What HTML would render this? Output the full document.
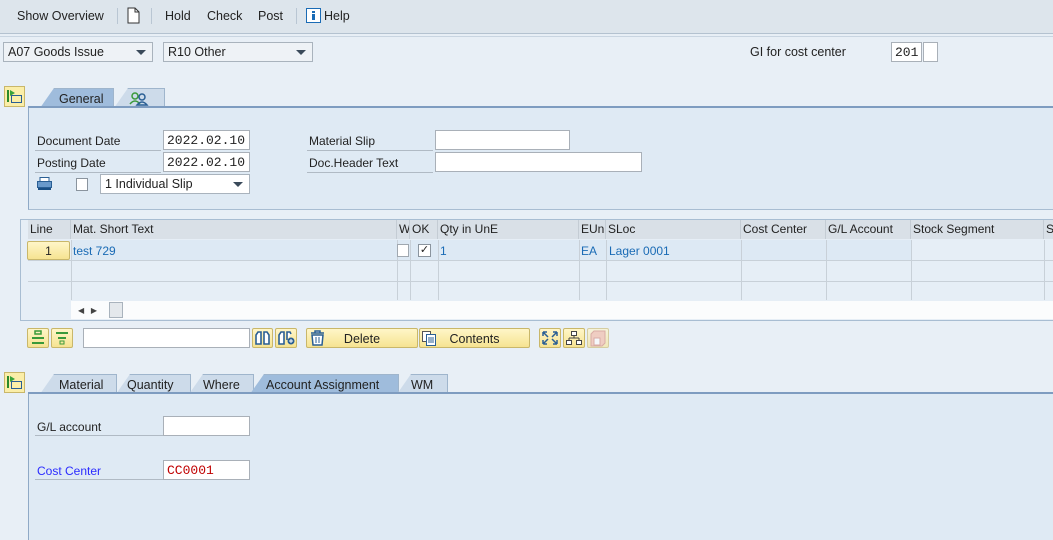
<!DOCTYPE html>
<html><head><meta charset="utf-8"><style>
*{box-sizing:border-box;margin:0;padding:0}
body{width:1053px;height:540px;overflow:hidden;background:#e8eff6;font-family:"Liberation Sans",Tahoma,sans-serif;font-size:12px;color:#222;position:relative}
.a{position:absolute}
.tb{left:0;top:0;width:1053px;height:34px;background:#dde5ec;border-bottom:1px solid #b4c2d0}
.tb span{position:absolute;top:9px;font-size:12.5px;color:#222}
.sep{position:absolute;top:8px;width:1px;height:16px;background:#b9c6d3}
.dd{height:20px;background:#eef2f6;border:1px solid #a9b3bd;padding:2px 4px;font-size:12.5px}
.dd:after{content:"";position:absolute;right:6px;top:7px;border-left:5px solid transparent;border-right:5px solid transparent;border-top:5px solid #3a4a5a}
.in{height:20px;background:#fff;border:1px solid #a9b0b8;padding:2px 3px;font-family:"Liberation Mono",monospace;font-size:13px;line-height:15px}
.lbl{font-size:12px}
.tab{height:20px;background:#cddbea;border:1px solid #9fb5cc;border-bottom:none;clip-path:polygon(14px 0,100% 0,100% 100%,0 100%);padding:3px 0 0 18px;font-size:12.5px}
.tab.on{background:#9fbcdc}
.th{top:220px;height:19px;background:#d9e0e7;border-right:1px solid #c4ccd4;padding:2px 2px;font-size:12px}
.vl{width:1px;background:#c8d0d8}
.hl{height:1px;background:#c8d0d8}
.btn{height:20px;background:linear-gradient(#fff6c8,#f6e391);border:1px solid #c9b76a;border-radius:2px}
.blue{color:#1a6bb5}
</style></head><body>
<div class="a tb">
<span style="left:17px">Show Overview</span>
<div class="sep" style="left:117px"></div>
<svg class="a" style="left:127px;top:7px" width="13" height="17"><path d="M1 1H8L12 5V16H1Z" fill="#fff" stroke="#333"/><path d="M8 1V5H12" fill="none" stroke="#333"/></svg>
<div class="sep" style="left:151px"></div>
<span style="left:165px">Hold</span><span style="left:207px">Check</span><span style="left:258px">Post</span>
<div class="sep" style="left:296px"></div>
<svg class="a" style="left:306px;top:8px" width="15" height="15"><rect x=".5" y=".5" width="14" height="14" fill="#fff" stroke="#1a6bb5"/><rect x="6" y="3" width="3" height="2" fill="#1a6bb5"/><rect x="6" y="6" width="3" height="6" fill="#1a6bb5"/></svg>
<span style="left:324px">Help</span>
</div>
<div class="a" style="left:0;top:36px;width:1053px;height:1px;background:#c9d5e1"></div>
<div class="a dd" style="left:3px;top:42px;width:150px">A07 Goods Issue</div>
<div class="a dd" style="left:163px;top:42px;width:150px">R10 Other</div>
<div class="a lbl" style="left:750px;top:45px;font-size:12.5px">GI for cost center</div>
<div class="a in" style="left:891px;top:42px;width:31px">201</div>
<div class="a in" style="left:923px;top:42px;width:15px"></div>

<div class="a" style="left:4px;top:86px;width:21px;height:21px;background:#fbeea8;border:1px solid #c9b76a"><svg width="19" height="19"><path d="M3 3V15" stroke="#2a8a2a" stroke-width="2"/><path d="M5 3L10 6L5 9Z" fill="#3aa33a"/><rect x="6.5" y="8.5" width="10" height="7" fill="none" stroke="#2a5f94"/></svg></div>
<div class="a tab on" style="left:40px;top:88px;width:74px">General</div>
<div class="a tab" style="left:114px;top:88px;width:51px"><svg width="20" height="14" style="margin-left:-4px"><circle cx="6" cy="4" r="3" fill="none" stroke="#3a9a3a" stroke-width="1.5"/><path d="M1 12Q6 6 11 12" fill="none" stroke="#3a9a3a" stroke-width="1.5"/><circle cx="13" cy="5" r="3" fill="none" stroke="#2a5f94" stroke-width="1.5"/><path d="M8 13Q13 7 18 13Z" fill="none" stroke="#2a5f94" stroke-width="1.5"/></svg></div>
<div class="a" style="left:28px;top:106px;width:1025px;height:2px;background:#7e9cc0"></div>
<div class="a" style="left:28px;top:108px;width:1025px;height:102px;background:#dfeaf4;border-left:1px solid #8fa9c6;border-bottom:1px solid #a8bdd2"></div>
<div class="a lbl" style="left:37px;top:134px">Document Date</div>
<div class="a" style="left:35px;top:150px;width:126px;height:1px;background:#b0bac4"></div>
<div class="a in" style="left:163px;top:130px;width:87px">2022.02.10</div>
<div class="a lbl" style="left:37px;top:156px">Posting Date</div>
<div class="a" style="left:35px;top:172px;width:126px;height:1px;background:#b0bac4"></div>
<div class="a in" style="left:163px;top:152px;width:87px">2022.02.10</div>
<svg class="a" style="left:37px;top:177px" width="15" height="14"><rect x="3" y="0.5" width="9" height="4" fill="#fff" stroke="#2a5f94"/><rect x="0.5" y="4.5" width="14" height="6" fill="#6a9acb" stroke="#2a5f94"/><rect x="1" y="11" width="13" height="2" fill="#1a4f84"/></svg>
<div class="a" style="left:76px;top:178px;width:12px;height:13px;background:#fff;border:1px solid #8a949e"></div>
<div class="a dd" style="left:100px;top:174px;width:150px;background:#fff">1 Individual Slip</div>
<div class="a lbl" style="left:309px;top:134px">Material Slip</div>
<div class="a" style="left:307px;top:150px;width:126px;height:1px;background:#b0bac4"></div>
<div class="a in" style="left:435px;top:130px;width:135px"></div>
<div class="a lbl" style="left:309px;top:156px">Doc.Header Text</div>
<div class="a" style="left:307px;top:172px;width:126px;height:1px;background:#b0bac4"></div>
<div class="a in" style="left:435px;top:152px;width:207px"></div>

<!-- table -->
<div class="a" style="left:20px;top:219px;width:1033px;height:102px;background:#e6eef6;border:1px solid #a8bdd2;border-right:none"></div>
<div class="a th" style="left:28px;width:43px">Line</div>
<div class="a th" style="left:71px;width:326px">Mat. Short Text</div>
<div class="a th" style="left:397px;width:13px;overflow:hidden">W</div>
<div class="a th" style="left:410px;width:28px">OK</div>
<div class="a th" style="left:438px;width:141px">Qty in UnE</div>
<div class="a th" style="left:579px;width:27px">EUn</div>
<div class="a th" style="left:606px;width:135px">SLoc</div>
<div class="a th" style="left:741px;width:85px">Cost Center</div>
<div class="a th" style="left:826px;width:85px">G/L Account</div>
<div class="a th" style="left:911px;width:133px">Stock Segment</div>
<div class="a th" style="left:1044px;width:20px">S</div>
<div class="a" style="left:71px;top:240px;width:840px;height:20px;background:#dde9f4"></div>
<div class="a hl" style="left:28px;top:260px;width:1025px"></div>
<div class="a hl" style="left:28px;top:281px;width:1025px"></div>
<div class="a vl" style="left:71px;top:240px;height:60px"></div>
<div class="a vl" style="left:397px;top:240px;height:60px"></div>
<div class="a vl" style="left:410px;top:240px;height:60px"></div>
<div class="a vl" style="left:438px;top:240px;height:60px"></div>
<div class="a vl" style="left:579px;top:240px;height:60px"></div>
<div class="a vl" style="left:606px;top:240px;height:60px"></div>
<div class="a vl" style="left:741px;top:240px;height:60px"></div>
<div class="a vl" style="left:826px;top:240px;height:60px"></div>
<div class="a vl" style="left:911px;top:240px;height:60px"></div>
<div class="a vl" style="left:1044px;top:240px;height:60px"></div>
<div class="a btn" style="left:27px;top:241px;width:43px;height:19px;text-align:center;padding-top:2px">1</div>
<div class="a blue" style="left:73px;top:244px">test 729</div>
<div class="a" style="left:397px;top:244px;width:12px;height:13px;background:#fff;border:1px solid #a0a8b0"></div>
<div class="a" style="left:418px;top:244px;width:13px;height:13px;background:#fff;border:1px solid #8a949e;font-size:11px;line-height:11px;text-align:center">✓</div>
<div class="a blue" style="left:440px;top:244px">1</div>
<div class="a blue" style="left:581px;top:244px">EA</div>
<div class="a blue" style="left:609px;top:244px">Lager 0001</div>
<div class="a" style="left:71px;top:301px;width:982px;height:18px;background:#fbfcfd"></div>
<div class="a" style="left:78px;top:306px;font-size:8px;color:#444">◀&nbsp;&nbsp;&nbsp;▶</div>
<div class="a" style="left:109px;top:302px;width:14px;height:16px;background:#e4e8ec;border:1px solid #a9b3bd"></div>

<!-- buttons -->
<div class="a btn" style="left:27px;top:328px;width:22px"><svg width="20" height="18"><rect x="7" y="2" width="6" height="3" fill="none" stroke="#3a9a3a" stroke-width="1.5"/><rect x="4" y="8" width="12" height="2" fill="#3a9a3a"/><rect x="4" y="13" width="12" height="2" fill="#3a9a3a"/></svg></div>
<div class="a btn" style="left:51px;top:328px;width:22px"><svg width="20" height="18"><rect x="4" y="3" width="12" height="2" fill="#3a9a3a"/><rect x="6" y="8" width="8" height="2" fill="#3a9a3a"/><rect x="8" y="12" width="4" height="3" fill="none" stroke="#3a9a3a"/></svg></div>
<div class="a in" style="left:83px;top:328px;width:167px"></div>
<div class="a btn" style="left:252px;top:328px;width:21px"><svg width="19" height="18"><path d="M3 15V6L5 3H8V15ZM11 15V3H14L16 6V15Z" fill="#fff" stroke="#2a5f94" stroke-width="1.6"/></svg></div>
<div class="a btn" style="left:275px;top:328px;width:22px"><svg width="20" height="18"><path d="M3 15V6L5 3H8V15ZM11 11V3H14L15 5" fill="#fff" stroke="#2a5f94" stroke-width="1.6"/><circle cx="15" cy="12" r="3.5" fill="#2a5f94"/><path d="M13 12H17M15 10V14" stroke="#fff"/></svg></div>
<div class="a btn" style="left:306px;top:328px;width:112px;text-align:center;padding-top:3px;font-size:12.5px"><svg class="a" style="left:2px;top:1px" width="17" height="17"><path d="M2 3H15M6 3V1H11V3M3 5L4 15H13L14 5Z" fill="#fff" stroke="#2a5f94" stroke-width="1.5"/><path d="M7 7V13M10 7V13" stroke="#2a5f94"/></svg>Delete</div>
<div class="a btn" style="left:419px;top:328px;width:111px;text-align:center;padding-top:3px;font-size:12.5px"><svg class="a" style="left:1px;top:1px" width="17" height="17"><rect x="1.5" y="1.5" width="8" height="10" fill="#fff" stroke="#555"/><rect x="5.5" y="4.5" width="9" height="11" fill="#fff" stroke="#2a5f94"/><path d="M7 8H13M7 10H13M7 12H13" stroke="#2a5f94"/></svg>Contents</div>
<div class="a btn" style="left:539px;top:328px;width:22px"><svg width="20" height="18"><path d="M3 3L8 8M17 3L12 8M3 15L8 10M17 15L12 10M3 3H7M3 3V7M17 3H13M17 3V7M3 15H7M3 15V11M17 15H13M17 15V11" stroke="#2a5f94" stroke-width="1.5" fill="none"/></svg></div>
<div class="a btn" style="left:563px;top:328px;width:22px"><svg width="20" height="18"><rect x="7.5" y="2.5" width="5" height="4" fill="#fff" stroke="#444"/><path d="M10 7V9M5 9H15M5 9V11M15 9V11" stroke="#444" fill="none"/><rect x="2.5" y="11.5" width="5" height="4" fill="#fff" stroke="#444"/><rect x="12.5" y="11.5" width="5" height="4" fill="#fff" stroke="#444"/></svg></div>
<div class="a btn" style="left:587px;top:328px;width:22px;opacity:.6"><svg width="20" height="18"><path d="M3 5L6 2H17V14L14 17H3Z" fill="#f4b8a0" stroke="#d08070"/><rect x="6" y="9" width="6" height="7" fill="#fff" stroke="#d08070"/></svg></div>

<!-- bottom tabs -->
<div class="a" style="left:4px;top:372px;width:21px;height:21px;background:#fbeea8;border:1px solid #c9b76a"><svg width="19" height="19"><path d="M3 3V15" stroke="#2a8a2a" stroke-width="2"/><path d="M5 3L10 6L5 9Z" fill="#3aa33a"/><rect x="6.5" y="8.5" width="10" height="7" fill="none" stroke="#2a5f94"/></svg></div>
<div class="a tab" style="left:40px;top:374px;width:77px">Material</div>
<div class="a tab" style="left:116px;top:374px;width:75px;padding-left:10px">Quantity</div>
<div class="a tab" style="left:189px;top:374px;width:65px;padding-left:13px">Where</div>
<div class="a tab on" style="left:250px;top:374px;width:149px;padding-left:15px">Account Assignment</div>
<div class="a tab" style="left:397px;top:374px;width:51px;padding-left:13px">WM</div>
<div class="a" style="left:28px;top:392px;width:1025px;height:2px;background:#7e9cc0"></div>
<div class="a" style="left:28px;top:394px;width:1025px;height:146px;background:#dfeaf4;border-left:1px solid #8fa9c6"></div>
<div class="a lbl" style="left:37px;top:420px">G/L account</div>
<div class="a" style="left:35px;top:435px;width:128px;height:1px;background:#b0bac4"></div>
<div class="a in" style="left:163px;top:416px;width:87px"></div>
<div class="a lbl" style="left:37px;top:464px;color:#2b2bff">Cost Center</div>
<div class="a" style="left:35px;top:479px;width:128px;height:1px;background:#b0bac4"></div>
<div class="a in" style="left:163px;top:460px;width:87px;color:#c00000">CC0001</div>
</body></html>
